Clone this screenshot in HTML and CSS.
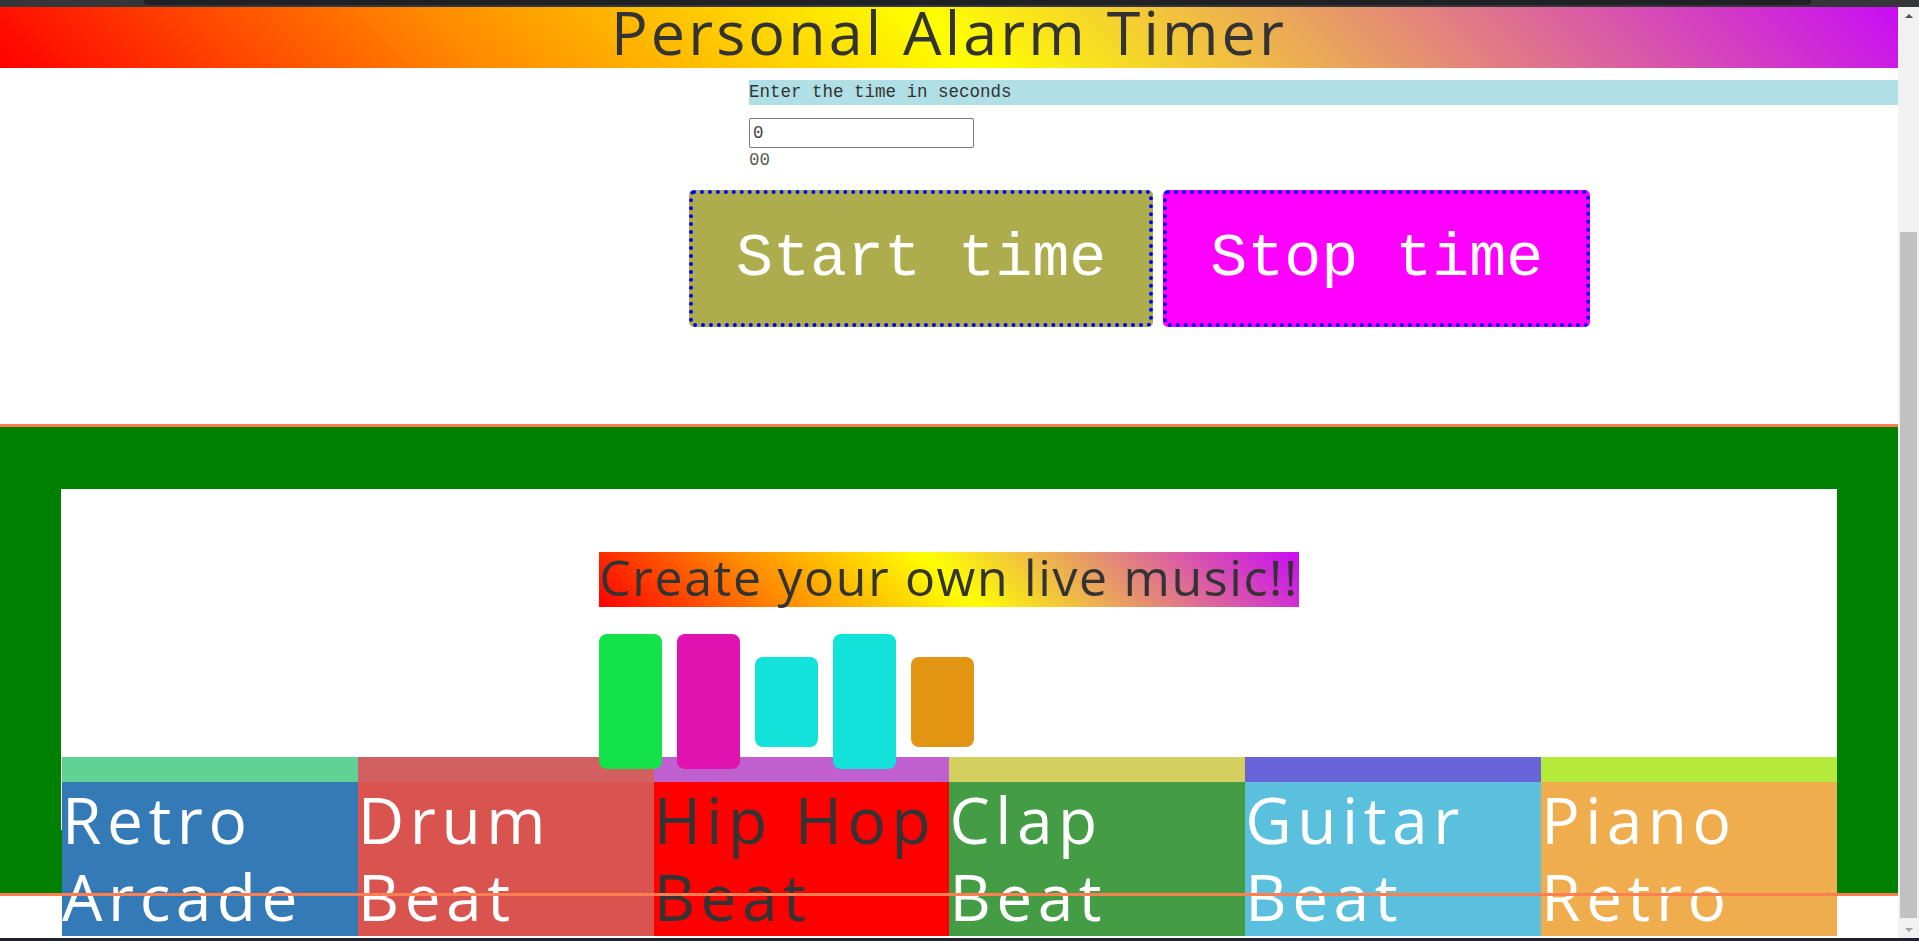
FILE: index.html
```html
<!DOCTYPE html>
<html lang="en">
<head>
    <meta charset="UTF-8">
    <meta name="viewport" content="width=device-width, initial-scale=1.0">
    <title>Personal Alarm Timer</title>
    <link rel="stylesheet" href="styles.css">
</head>
<body>
    <div class="window-top"><div class="window-tab"></div></div>

    <div class="viewport">
        <div class="page">
            <header class="title-bar">
                <h1>Personal Alarm Timer</h1>
            </header>

            <section class="timer">
                <p class="timer-label">Enter the time in seconds</p>
                <input class="timer-input" type="text" value="0">
                <div class="timer-readout">00</div>
                <div class="timer-actions">
                    <button class="btn-start">Start time</button>
                    <button class="btn-stop">Stop time</button>
                </div>
            </section>

            <section class="studio">
                <div class="board">
                    <div class="stage">
                        <h2 class="stage-title">Create your own live music!!</h2>
                        <div class="levels">
                            <span class="level tall green"></span>
                            <span class="level tall pink"></span>
                            <span class="level cyan"></span>
                            <span class="level tall cyan"></span>
                            <span class="level amber"></span>
                        </div>
                    </div>

                    <div class="pads">
                        <div class="pad pad-retro">Retro Arcade</div>
                        <div class="pad pad-drum">Drum Beat</div>
                        <div class="pad pad-hiphop">Hip Hop Beat</div>
                        <div class="pad pad-clap">Clap Beat</div>
                        <div class="pad pad-guitar">Guitar Beat</div>
                        <div class="pad pad-piano">Piano Retro</div>
                    </div>
                </div>
            </section>

            <footer class="page-end"></footer>
        </div>

        <div class="scrollbar">
            <div class="sb-btn"><span class="arrow-up"></span></div>
            <div class="sb-track"><div class="sb-thumb"></div></div>
            <div class="sb-btn"><span class="arrow-down"></span></div>
        </div>
    </div>

    <div class="window-bottom"></div>
</body>
</html>
```

FILE: styles.css
```css
:root {
    --rainbow: linear-gradient(45deg, #ff0000 0%, #ff8c00 25%, #ffff00 50%, #c80cf5 100%);
    --coral: #ff7f50;
    --text-dark: #333333;
}

* {
    box-sizing: border-box;
}

body {
    margin: 0;
    height: 941px;
    overflow: hidden;
    display: flex;
    flex-direction: column;
    background-color: #ffffff;
    font-family: 'Open Sans', sans-serif;
}

/* window frame */
.window-top {
    height: 7px;
    background-color: #35363a;
}

.window-tab {
    height: 5px;
    margin: 0 108px 0 144px;
    background-color: #202124;
    border-radius: 0 0 4px 4px;
}

.window-bottom {
    height: 3px;
    background-color: #1e2130;
}

.viewport {
    flex: 1;
    display: flex;
    min-height: 0;
}

.page {
    flex: 1;
    overflow: hidden;
}

/* scrollbar */
.scrollbar {
    width: 21px;
    display: flex;
    flex-direction: column;
    background-color: #f1f1f1;
}

.sb-btn {
    height: 17px;
    display: flex;
    align-items: center;
    justify-content: center;
}

.arrow-up,
.arrow-down {
    width: 0;
    height: 0;
    border-left: 4px solid transparent;
    border-right: 4px solid transparent;
}

.arrow-up {
    border-bottom: 4px solid #505050;
}

.arrow-down {
    border-top: 4px solid #a3a3a3;
}

.sb-track {
    flex: 1;
    padding: 208px 2px 0;
}

.sb-thumb {
    height: 686px;
    background-color: #c1c1c1;
}

/* header */
.title-bar {
    height: 61px;
    background: var(--rainbow);
    overflow: hidden;
}

.title-bar h1 {
    margin: 0;
    padding-top: 6px;
    text-align: center;
    font-size: 61px;
    font-weight: 400;
    line-height: 37px;
    letter-spacing: 3.1px;
    color: var(--text-dark);
}

/* timer */
.timer {
    height: 356px;
    padding-top: 12px;
    font-family: 'Liberation Mono', 'Courier New', monospace;
}

.timer-label {
    margin: 0 0 0 749px;
    padding: 2px 0 3px;
    font-size: 17.5px;
    line-height: 20px;
    color: var(--text-dark);
    background-color: #b0e0e6;
}

.timer-input {
    display: block;
    width: 225px;
    height: 30px;
    margin: 13px 0 0 749px;
    padding: 0 3px;
    border: 1px solid #767676;
    border-radius: 2px;
    font-family: inherit;
    font-size: 17.5px;
    color: #444444;
}

.timer-readout {
    margin: 2px 0 0 749px;
    font-size: 17.5px;
    line-height: 20px;
    color: #5a5a5a;
}

.timer-actions {
    display: flex;
    gap: 10px;
    margin: 20px 0 0 689px;
}

.timer-actions button {
    height: 137px;
    padding: 0 43px;
    border: 4px dotted #0000ff;
    border-radius: 5px;
    font-family: 'Liberation Mono', 'Courier New', monospace;
    font-size: 61.7px;
    color: #ffffff;
    cursor: pointer;
}

.btn-start {
    background-color: #aead4d;
}

.btn-stop {
    background-color: #ff00ff;
}

/* music studio */
.studio {
    height: 469px;
    padding: 62px 61px 0;
    border-top: 3px solid var(--coral);
    background-color: #008000;
}

.board {
    height: 341px;
    padding-top: 63px;
    background-color: #ffffff;
}

.stage {
    width: fit-content;
    margin: 0 auto;
}

.stage-title {
    display: inline-block;
    margin: 0;
    padding-bottom: 5px;
    font-size: 50px;
    font-weight: 400;
    line-height: 50px;
    letter-spacing: 1.65px;
    color: var(--text-dark);
    background: var(--rainbow);
}

.levels {
    position: relative;
    z-index: 1;
    display: flex;
    align-items: center;
    gap: 15px;
    height: 135px;
    margin-top: 27px;
}

.level {
    width: 63px;
    height: 90px;
    border-radius: 8px;
}

.level.tall {
    height: 135px;
}

.green { background-color: #13e24a; }
.pink { background-color: #e113b0; }
.cyan { background-color: #13e2db; }
.amber { background-color: #e29413; }

.pads {
    display: flex;
    margin: -12px 0 0 1px;
}

.pad {
    flex: 1 1 0;
    min-width: 0;
    border-top: 25px solid;
    font-size: 64px;
    line-height: 76.8px;
    letter-spacing: 5.5px;
    color: #ffffff;
}

.pad-retro { background-color: #337ab7; border-top-color: #60d394; }
.pad-drum { background-color: #d9534f; border-top-color: #d26060; }
.pad-hiphop { background-color: #ff0000; border-top-color: #c060d0; color: var(--text-dark); }
.pad-clap { background-color: #449d44; border-top-color: #d4d060; }
.pad-guitar { background-color: #5bc0de; border-top-color: #6863d8; }
.pad-piano { background-color: #f0ad4e; border-top-color: #b5ea3a; }

/* closing rule, drawn over the pads that run past the studio */
.page-end {
    position: relative;
    border-top: 3px solid var(--coral);
}
```
